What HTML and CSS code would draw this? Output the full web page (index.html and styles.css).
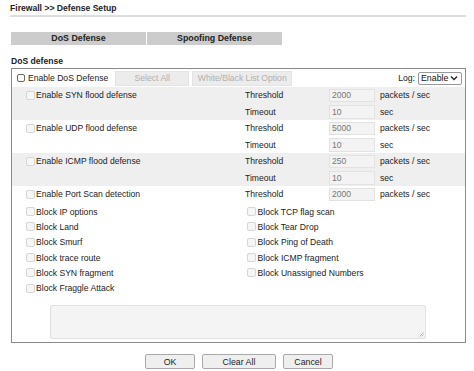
FILE: index.html
```html
<!DOCTYPE html>
<html>
<head>
<meta charset="utf-8">
<link rel="stylesheet" href="styles.css">
</head>
<body>
<div class="page">
  <div class="title">Firewall &gt;&gt; Defense Setup</div>
  <div class="tabs">
    <div class="tab">DoS Defense</div>
    <div class="tab">Spoofing Defense</div>
  </div>
  <div class="section-title">DoS defense</div>
  <div class="box">
    <div class="toprow">
      <label class="chk-label main"><span class="cb on"></span>Enable DoS Defense</label>
      <span class="btn dis sel">Select All</span>
      <span class="btn dis wbl">White/Black List Option</span>
      <span class="spacer"></span>
      <span class="log">Log:</span>
      <span class="select">Enable<svg width="8" height="6" viewBox="0 0 8 6"><path d="M1 1.5 L4 4.5 L7 1.5" fill="none" stroke="#222" stroke-width="1.3"/></svg></span>
    </div>
    <div class="group shade">
      <div class="lbl"><span class="cb"></span>Enable SYN flood defense</div>
      <div class="k">Threshold</div><div class="v"><span class="inp">2000</span></div><div class="u">packets / sec</div>
      <div class="k">Timeout</div><div class="v"><span class="inp">10</span></div><div class="u">sec</div>
    </div>
    <div class="group">
      <div class="lbl"><span class="cb"></span>Enable UDP flood defense</div>
      <div class="k">Threshold</div><div class="v"><span class="inp">5000</span></div><div class="u">packets / sec</div>
      <div class="k">Timeout</div><div class="v"><span class="inp">10</span></div><div class="u">sec</div>
    </div>
    <div class="group shade">
      <div class="lbl"><span class="cb"></span>Enable ICMP flood defense</div>
      <div class="k">Threshold</div><div class="v"><span class="inp">250</span></div><div class="u">packets / sec</div>
      <div class="k">Timeout</div><div class="v"><span class="inp">10</span></div><div class="u">sec</div>
    </div>
    <div class="group single">
      <div class="lbl"><span class="cb"></span>Enable Port Scan detection</div>
      <div class="k">Threshold</div><div class="v"><span class="inp">2000</span></div><div class="u">packets / sec</div>
    </div>
    <div class="blocks">
      <div class="bitem"><span class="cb"></span>Block IP options</div>
      <div class="bitem r"><span class="cb"></span>Block TCP flag scan</div>
      <div class="bitem"><span class="cb"></span>Block Land</div>
      <div class="bitem r"><span class="cb"></span>Block Tear Drop</div>
      <div class="bitem"><span class="cb"></span>Block Smurf</div>
      <div class="bitem r"><span class="cb"></span>Block Ping of Death</div>
      <div class="bitem"><span class="cb"></span>Block trace route</div>
      <div class="bitem r"><span class="cb"></span>Block ICMP fragment</div>
      <div class="bitem"><span class="cb"></span>Block SYN fragment</div>
      <div class="bitem r"><span class="cb"></span>Block Unassigned Numbers</div>
      <div class="bitem"><span class="cb"></span>Block Fraggle Attack</div>
    </div>
    <div class="ta-wrap"><div class="textarea"><svg class="grip" width="5" height="5" viewBox="0 0 5 5"><path d="M4.5 0.5 L0.5 4.5 M4.5 2.5 L2.5 4.5" stroke="#aaa" stroke-width="0.8"/></svg></div></div>
  </div>
  <div class="actions">
    <span class="btn act ok">OK</span>
    <span class="btn act clr">Clear All</span>
    <span class="btn act can">Cancel</span>
  </div>
</div>
</body>
</html>
```
FILE: styles.css
```css
* { box-sizing: border-box; }
html, body { margin: 0; padding: 0; background: #fff; }
body {
  font-family: "Liberation Sans", Arial, sans-serif;
  font-size: 8.6px;
  color: #222;
}
.page { padding: 3px 8px 0 11px; width: 474px; }
.title {
  font-weight: bold;
  line-height: 11px;
  height: 14px;
  border-bottom: 2px solid #dedede;
  width: 456px;
  margin-left: -1px;
  padding-left: 0;
}
.tabs { display: flex; gap: 1px; margin-top: 15px; }
.tab {
  width: 135px;
  height: 13px;
  line-height: 13px;
  background: #cccccc;
  text-align: center;
  font-weight: bold;
  font-size: 8.8px;
  color: #222;
}
.section-title { font-weight: bold; line-height: 12px; margin-top: 10px; }
.box {
  margin-top: 1px;
  width: 455px;
  border: 1px solid #8a8a8a;
  height: 275px;
}
.toprow {
  display: flex;
  align-items: center;
  height: 18px;
  padding-left: 5px;
  padding-right: 3px;
}
.chk-label { display: flex; align-items: center; }
.cb {
  display: inline-block;
  width: 9px;
  height: 9px;
  border: 1px solid #d6d6d6;
  background: #f6f6f6;
  border-radius: 2px;
  margin-right: 1px;
  flex: none;
}
.cb.on { border-color: #666; background: #fff; width: 8px; height: 8px; margin-right: 3px; }
.btn {
  display: inline-flex;
  align-items: center;
  justify-content: center;
  height: 15px;
  background: #ececec;
  border: 1px solid #e4e4e4;
}
.btn.dis { color: #b0b0b0; }
.sel { width: 74px; margin-left: 7px; }
.wbl { width: 100px; margin-left: 3px; }
.spacer { flex: 1; }
.log { margin-right: 3px; }
.select {
  display: inline-flex;
  align-items: center;
  justify-content: space-between;
  width: 44px;
  height: 13px;
  border: 1px solid #999;
  border-radius: 2px;
  padding: 0 3px 0 2px;
  font-size: 8.8px;
  color: #111;
}
.group {
  display: grid;
  grid-template-columns: 233px 84px 51px 1fr;
  grid-template-rows: 16.5px 16.5px;
  align-items: center;
}
.group.single { grid-template-rows: 16.5px; }
.group.shade { background: #efefef; }
.lbl {
  grid-row: 1 / 3;
  align-self: start;
  height: 16.5px;
  display: flex;
  align-items: center;
  padding-left: 14px;
}
.single .lbl { grid-row: 1; }
.k { grid-column: 2; }
.v { grid-column: 3; display: flex; }
.u { grid-column: 4; }
.inp {
  display: flex;
  align-items: center;
  width: 46px;
  height: 13.5px;
  background: #f3f3f3;
  border: 1px solid #e2e2e2;
  padding-left: 2px;
  color: #777;
}
.blocks {
  display: grid;
  grid-template-columns: 234.5px 1fr;
  grid-auto-rows: 15.3px;
  padding-top: 1.5px;
}
.bitem { display: flex; align-items: center; padding-left: 14px; }
.bitem.r { padding-left: 0; }
.bitem.r .cb { margin-right: 2px; }
.ta-wrap { padding: 9px 0 0 38px; }
.textarea {
  position: relative;
  width: 376px;
  height: 34px;
  background: #f4f4f4;
  border: 1px solid #e0e0e0;
  border-radius: 2px;
}
.grip { position: absolute; right: 1px; bottom: 1px; }
.actions { display: flex; gap: 7px; padding-left: 134px; margin-top: 11px; }
.btn.act {
  height: 15px;
  background: #efefef;
  border: 1px solid #a9a9a9;
  border-radius: 2px;
  color: #222;
  font-size: 8.8px;
}
.ok { width: 50px; }
.clr { width: 74px; }
.can { width: 50px; }
```
